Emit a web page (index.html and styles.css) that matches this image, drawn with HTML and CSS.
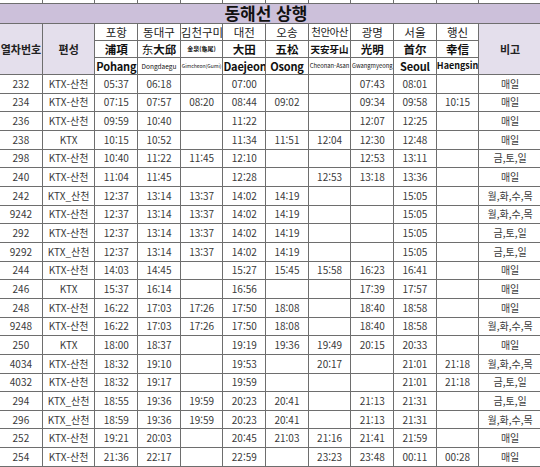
FILE: index.html
```html
<!DOCTYPE html>
<html lang="ko">
<head>
<meta charset="utf-8">
<title>동해선 상행</title>
<link rel="stylesheet" href="styles.css">
</head>
<body>
<table class="tt">
<colgroup>
<col class="c-no"><col class="c-type">
<col class="c-st"><col class="c-st"><col class="c-st"><col class="c-st"><col class="c-st"><col class="c-st"><col class="c-st"><col class="c-st"><col class="c-st">
<col class="c-note">
</colgroup>
<tr class="strip"><td></td><td></td><td></td><td></td><td></td><td></td><td></td><td></td><td></td><td></td><td></td><td></td></tr>
<tr class="title"><td colspan="12">동해선 상행</td></tr>
<tr class="h1">
<th rowspan="3" class="side">열차번호</th>
<th rowspan="3" class="side">편성</th>
<th>포항</th><th>동대구</th><th>김천구미</th><th>대전</th><th>오송</th><th class="sq">천안아산</th><th>광명</th><th>서울</th><th>행신</th>
<th rowspan="3" class="side">비고</th>
</tr>
<tr class="h2">
<th>浦項</th><th><span class="nb">东</span>大邱</th><th class="tiny">金泉(龜尾)</th><th>大田</th><th>五松</th><th class="mid">天安牙山</th><th>光明</th><th>首尔</th><th>幸信</th>
</tr>
<tr class="h3">
<th>Pohang</th><th class="en-s">Dongdaegu</th><th class="en-xs">Gimcheon(Gumi)</th><th>Daejeon</th><th>Osong</th><th class="en-xs2">Cheonan-Asan</th><th class="en-xs2">Gwangmyeong</th><th>Seoul</th><th class="en-m">Haengsin</th>
</tr>
<tr><td>232</td><td>KTX-산천</td><td>05:37</td><td>06:18</td><td></td><td>07:00</td><td></td><td></td><td>07:43</td><td>08:01</td><td></td><td>매일</td></tr>
<tr><td>234</td><td>KTX-산천</td><td>07:15</td><td>07:57</td><td>08:20</td><td>08:44</td><td>09:02</td><td></td><td>09:34</td><td>09:58</td><td>10:15</td><td>매일</td></tr>
<tr><td>236</td><td>KTX-산천</td><td>09:59</td><td>10:40</td><td></td><td>11:22</td><td></td><td></td><td>12:07</td><td>12:25</td><td></td><td>매일</td></tr>
<tr><td>238</td><td>KTX</td><td>10:15</td><td>10:52</td><td></td><td>11:34</td><td>11:51</td><td>12:04</td><td>12:30</td><td>12:48</td><td></td><td>매일</td></tr>
<tr><td>298</td><td>KTX-산천</td><td>10:40</td><td>11:22</td><td>11:45</td><td>12:10</td><td></td><td></td><td>12:53</td><td>13:11</td><td></td><td>금,토,일</td></tr>
<tr><td>240</td><td>KTX-산천</td><td>11:04</td><td>11:45</td><td></td><td>12:28</td><td></td><td>12:53</td><td>13:18</td><td>13:36</td><td></td><td>매일</td></tr>
<tr><td>242</td><td>KTX_산천</td><td>12:37</td><td>13:14</td><td>13:37</td><td>14:02</td><td>14:19</td><td></td><td></td><td>15:05</td><td></td><td>월,화,수,목</td></tr>
<tr><td>9242</td><td>KTX-산천</td><td>12:37</td><td>13:14</td><td>13:37</td><td>14:02</td><td>14:19</td><td></td><td></td><td>15:05</td><td></td><td>월,화,수,목</td></tr>
<tr><td>292</td><td>KTX-산천</td><td>12:37</td><td>13:14</td><td>13:37</td><td>14:02</td><td>14:19</td><td></td><td></td><td>15:05</td><td></td><td>금,토,일</td></tr>
<tr><td>9292</td><td>KTX_산천</td><td>12:37</td><td>13:14</td><td>13:37</td><td>14:02</td><td>14:19</td><td></td><td></td><td>15:05</td><td></td><td>금,토,일</td></tr>
<tr><td>244</td><td>KTX-산천</td><td>14:03</td><td>14:45</td><td></td><td>15:27</td><td>15:45</td><td>15:58</td><td>16:23</td><td>16:41</td><td></td><td>매일</td></tr>
<tr><td>246</td><td>KTX</td><td>15:37</td><td>16:14</td><td></td><td>16:56</td><td></td><td></td><td>17:39</td><td>17:57</td><td></td><td>매일</td></tr>
<tr><td>248</td><td>KTX-산천</td><td>16:22</td><td>17:03</td><td>17:26</td><td>17:50</td><td>18:08</td><td></td><td>18:40</td><td>18:58</td><td></td><td>매일</td></tr>
<tr><td>9248</td><td>KTX-산천</td><td>16:22</td><td>17:03</td><td>17:26</td><td>17:50</td><td>18:08</td><td></td><td>18:40</td><td>18:58</td><td></td><td>월,화,수,목</td></tr>
<tr><td>250</td><td>KTX</td><td>18:00</td><td>18:37</td><td></td><td>19:19</td><td>19:36</td><td>19:49</td><td>20:15</td><td>20:33</td><td></td><td>매일</td></tr>
<tr><td>4034</td><td>KTX-산천</td><td>18:32</td><td>19:10</td><td></td><td>19:53</td><td></td><td>20:17</td><td></td><td>21:01</td><td>21:18</td><td>월,화,수,목</td></tr>
<tr><td>4032</td><td>KTX-산천</td><td>18:32</td><td>19:17</td><td></td><td>19:59</td><td></td><td></td><td></td><td>21:01</td><td>21:18</td><td>금,토,일</td></tr>
<tr><td>294</td><td>KTX_산천</td><td>18:55</td><td>19:36</td><td>19:59</td><td>20:23</td><td>20:41</td><td></td><td>21:13</td><td>21:31</td><td></td><td>금,토,일</td></tr>
<tr><td>296</td><td>KTX_산천</td><td>18:59</td><td>19:36</td><td>19:59</td><td>20:23</td><td>20:41</td><td></td><td>21:13</td><td>21:31</td><td></td><td>월,화,수,목</td></tr>
<tr><td>252</td><td>KTX-산천</td><td>19:21</td><td>20:03</td><td></td><td>20:45</td><td>21:03</td><td>21:16</td><td>21:41</td><td>21:59</td><td></td><td>매일</td></tr>
<tr><td>254</td><td>KTX-산천</td><td>21:36</td><td>22:17</td><td></td><td>22:59</td><td></td><td>23:23</td><td>23:48</td><td>00:11</td><td>00:28</td><td>매일</td></tr>
</table>
</body>
</html>
```

FILE: styles.css
```css
html, body {
  margin: 0;
  padding: 0;
  background: #ffffff;
}

body {
  width: 540px;
  height: 467px;
  overflow: hidden;
  font-family: "Noto Sans CJK KR", "Noto Sans", sans-serif;
  color: #3a3a3a;
}

.tt {
  border-collapse: collapse;
  table-layout: fixed;
  width: 540px;
}

.c-no { width: 42.3px; }
.c-type { width: 52.7px; }
.c-st { width: 42.67px; }
.c-note { width: 61.97px; }

.tt td,
.tt th {
  border: 1px solid #6e6e6e;
  padding: 0;
  text-align: center;
  vertical-align: middle;
  white-space: nowrap;
  overflow: hidden;
  font-size: 10px;
  line-height: 12px;
  font-weight: normal;
}

.tt tr > :first-child { border-left: none; }
.tt tr > :last-child { border-right: none; }

.tt tr td {
  height: 17.67px;
}

.tt tr.strip td {
  border-top: none;
  height: 3px;
}

.tt tr.title td {
  height: 18.5px;
  padding-right: 9px;
  background: #ccc0da;
  font-size: 17px;
  line-height: 18px;
  font-weight: bold;
  color: #111111;
  overflow: visible;
}

.tt th.side {
  background: #e4dfec;
  font-size: 11px;
  font-weight: bold;
  color: #222222;
}

.h1 th {
  height: 16px;
  font-size: 11.5px;
  color: #222222;
}

.h1 th.sq { font-size: 10.5px; letter-spacing: -0.5px; }

.h2 th {
  height: 16px;
  font-size: 11.5px;
  font-weight: bold;
  color: #111111;
}

.h2 th .nb { font-weight: normal; }
.h2 th.tiny { font-size: 6px; }
.h2 th.mid { font-size: 9.5px; }

.h3 th {
  height: 16.5px;
  font-size: 11px;
  font-weight: bold;
  color: #111111;
  letter-spacing: -0.2px;
}

.h3 th.en-s { font-size: 6.5px; font-weight: normal; letter-spacing: 0; }
.h3 th.en-xs { font-size: 5px; font-weight: normal; letter-spacing: 0; }
.h3 th.en-xs2 { font-size: 5.8px; font-weight: normal; letter-spacing: 0; }
.h3 th.en-m { font-size: 9px; letter-spacing: 0; }
```
